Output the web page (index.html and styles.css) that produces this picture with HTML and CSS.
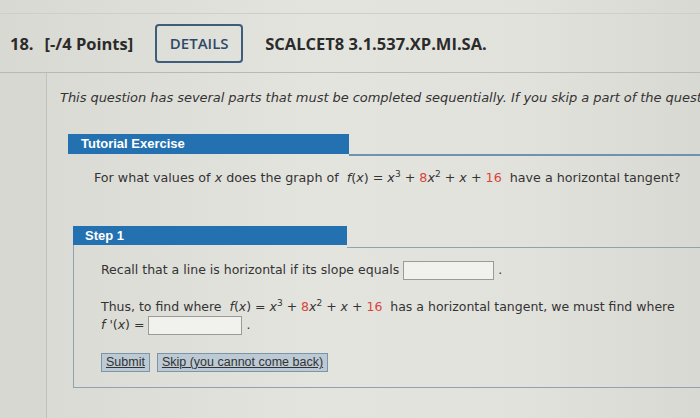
FILE: index.html
```html
<!DOCTYPE html>
<html>
<head>
<meta charset="utf-8">
<link rel="stylesheet" href="styles.css">
</head>
<body>
<div class="page">
  <div class="topline"></div>
  <div class="header">
    <span class="qnum">18.</span>
    <span class="points">[-/4 Points]</span>
    <span class="details">DETAILS</span>
    <span class="code">SCALCET8 3.1.537.XP.MI.SA.</span>
  </div>
  <div class="main">
    <div class="gutter"></div>
    <div class="content">
      <p class="intro">This question has several parts that must be completed sequentially. If you skip a part of the question, you will not receive any points for the skipped part.</p>
      <div class="tutorial">
        <div class="tabrow"><div class="tab">Tutorial Exercise</div><div class="fill"></div></div>
        <p class="question">For what values of <i>x</i> does the graph of&nbsp; <i>f</i>(<i>x</i>) = <i>x</i><sup>3</sup> + <span class="red">8</span><i>x</i><sup>2</sup> + <i>x</i> + <span class="red">16</span>&nbsp; have a horizontal tangent?</p>
      </div>
      <div class="step">
        <div class="tabrow"><div class="tab steptab">Step 1</div><div class="fill"></div></div>
        <div class="stepbody">
          <p class="line1">Recall that a line is horizontal if its slope equals <span class="input w90"></span> .</p>
          <p class="line2">Thus, to find where&nbsp; <i>f</i>(<i>x</i>) = <i>x</i><sup>3</sup> + <span class="red">8</span><i>x</i><sup>2</sup> + <i>x</i> + <span class="red">16</span>&nbsp; has a horizontal tangent, we must find where<br><i>f</i> '(<i>x</i>) = <span class="input w93"></span> .</p>
          <div class="buttons">
            <span class="btn">Submit</span>
            <span class="btn">Skip (you cannot come back)</span>
          </div>
        </div>
      </div>
    </div>
  </div>
</div>
</body>
</html>
```
FILE: styles.css
```css
html, body {
  margin: 0;
  padding: 0;
}
body {
  width: 700px;
  height: 418px;
  overflow: hidden;
  background: linear-gradient(90deg, #d9d9d3 0%, #e4e4df 45%, #e2e2dd 75%, #d9d9d3 100%);
  font-family: "DejaVu Sans", Verdana, sans-serif;
  color: #333;
}
.page {
  width: 700px;
  height: 418px;
  position: relative;
  overflow: hidden;
}
.topline {
  height: 13px;
  border-bottom: 1px solid #cfcfc9;
}
.header {
  height: 58px;
  display: flex;
  align-items: center;
  padding-left: 10px;
  border-bottom: 1px solid #b9b9b3;
  font-family: "Open Sans", sans-serif;
  font-weight: 700;
  font-size: 16.5px;
  color: #2b2b2b;
  white-space: nowrap;
}
.qnum {
  margin-right: 11px;
}
.details {
  margin-left: 22px;
  width: 88px;
  height: 39px;
  box-sizing: border-box;
  border: 2px solid #3e5c7c;
  border-radius: 4px;
  display: flex;
  align-items: center;
  justify-content: center;
  font-weight: 600;
  font-size: 15px;
  color: #2e4a68;
}
.code {
  margin-left: 22px;
}
.main {
  display: flex;
  height: 360px;
}
.gutter {
  width: 46px;
  flex: none;
  border-right: 1px solid #c2c2bc;
  background: #d8d8d2;
}
.content {
  flex: 1;
  padding-left: 13px;
  min-width: 0;
  overflow: hidden;
}
.intro {
  margin: 17px 0 0 0;
  font-style: oblique;
  font-size: 13px;
  letter-spacing: -0.05px;
  white-space: nowrap;
  color: #333;
}
.tutorial {
  margin-top: 29px;
  margin-left: 8px;
}
.tabrow {
  display: flex;
  align-items: flex-end;
}
.tab {
  width: 281px;
  height: 20px;
  background: #2471b1;
  color: #fff;
  font-family: "Liberation Sans", Arial, sans-serif;
  font-weight: 700;
  font-size: 13px;
  line-height: 20px;
  padding-left: 13px;
  box-sizing: border-box;
  flex: none;
}
.fill {
  flex: 1;
  border-bottom: 2px solid #6e92b2;
  margin-bottom: -2px;
}
.question {
  margin: 16px 0 0 26px;
  font-size: 12.7px;
  white-space: nowrap;
}
sup {
  font-size: 9px;
  line-height: 0;
}
.red {
  color: #d9443b;
}
.step {
  margin-top: 41px;
  margin-left: 13px;
  border-bottom: 1px solid #8ea2b4;
}
.steptab {
  width: 274px;
  height: 19px;
  line-height: 19px;
  padding-left: 12px;
}
.step .fill {
  border-bottom: 1px solid #8ea2b4;
  margin-bottom: -3px;
}
.stepbody {
  border-left: 1px solid #8ea2b4;
  padding: 15px 0 15px 27px;
  font-size: 12.5px;
}
.line1 {
  margin: 0;
  line-height: 19px;
}
.line2 {
  margin: 18px 0 0 0;
  line-height: 18px;
}
.input {
  display: inline-block;
  height: 19px;
  vertical-align: middle;
  background: #f1f1ee;
  border: 1px solid #9a9a96;
  box-sizing: border-box;
}
.w90 { width: 91px; }
.w93 { width: 94px; }
.buttons {
  margin-top: 18px;
  display: flex;
  gap: 7px;
}
.btn {
  font-family: "Liberation Sans", Arial, sans-serif;
  font-size: 12.5px;
  text-decoration: underline;
  color: #333;
  background: #bccad5;
  border: 1px solid #7d93a6;
  padding: 1px 4px;
  line-height: 15px;
}
```
